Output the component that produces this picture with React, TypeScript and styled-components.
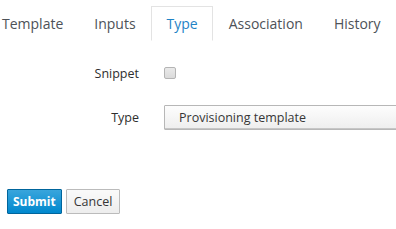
import React from "react";
import styled, { createGlobalStyle } from "styled-components";

const GlobalStyle = createGlobalStyle`
  html, body {
    margin: 0;
    padding: 0;
    background: #fff;
    overflow: hidden;
  }
  body {
    font-family: "Open Sans", "Liberation Sans", sans-serif;
    color: #363636;
  }
`;

const tabs = ["Template", "Inputs", "Type", "Association", "History"];

export default function App() {
  return (
    <>
      <GlobalStyle />
      <Page>
        <TabList>
          {tabs.map((tab) => (
            <Tab key={tab} $active={tab === "Type"}>
              {tab}
            </Tab>
          ))}
        </TabList>
        <Form>
          <FormRow>
            <Label htmlFor="snippet">Snippet</Label>
            <Control>
              <Checkbox id="snippet" type="checkbox" />
            </Control>
          </FormRow>
          <FormRow>
            <Label htmlFor="kind">Type</Label>
            <Control>
              <Select id="kind" defaultValue="provision">
                <option value="provision">Provisioning template</option>
              </Select>
            </Control>
          </FormRow>
        </Form>
        <Actions>
          <Button $primary>Submit</Button>
          <Button>Cancel</Button>
        </Actions>
      </Page>
    </>
  );
}

const Page = styled.div`
  width: 396px;
  height: 229px;
  overflow: hidden;
`;

const TabList = styled.ul`
  display: flex;
  list-style: none;
  margin: 6px 0 0 -14px;
  padding: 0;
  border-bottom: 1px solid #e3e3e3;
`;

const Tab = styled.li<{ $active?: boolean }>`
  height: 33px;
  line-height: 33px;
  padding: 0 14px 0 15px;
  font-size: 14px;
  white-space: nowrap;
  color: ${({ $active }) => ($active ? "#1f83c6" : "#4d5258")};
  border: 1px solid ${({ $active }) => ($active ? "#e3e3e3" : "transparent")};
  border-bottom-color: ${({ $active }) => ($active ? "#fff" : "transparent")};
  margin-bottom: -1px;
  background: #fff;
`;

const Form = styled.div`
  display: flex;
  flex-direction: column;
  gap: 20px;
  margin-top: 20px;
`;

const FormRow = styled.div`
  display: grid;
  grid-template-columns: 139px 1fr;
  column-gap: 25px;
  align-items: center;
  min-height: 24px;
`;

const Label = styled.label`
  text-align: right;
  font-size: 12.5px;
  font-weight: 500;
  color: #2e2e2e;
`;

const Control = styled.div`
  display: flex;
  align-items: center;
`;

const Checkbox = styled.input`
  appearance: none;
  width: 12px;
  height: 12px;
  margin: 0;
  border: 1px solid #b4b4b4;
  border-radius: 2px;
  background: linear-gradient(#e9e9e9, #dadada);
`;

const Select = styled.select`
  appearance: none;
  width: 260px;
  height: 25px;
  padding: 0 14px;
  font-family: "Open Sans", "Liberation Sans", sans-serif;
  font-size: 12.5px;
  color: #363636;
  border: 1px solid #b7b7b7;
  border-radius: 1px;
  background: linear-gradient(#fdfdfd, #eeeeee);
  box-shadow: inset 0 -1px 0 #c6c6c6;
`;

const Actions = styled.div`
  display: flex;
  gap: 4px;
  margin: 59px 0 0 7px;
`;

const Button = styled.button<{ $primary?: boolean }>`
  height: 25px;
  padding: 0 ${({ $primary }) => ($primary ? 5 : 7)}px;
  font-family: "Open Sans", "Liberation Sans", sans-serif;
  font-size: ${({ $primary }) => ($primary ? 12 : 12.5)}px;
  font-weight: ${({ $primary }) => ($primary ? 700 : 400)};
  color: ${({ $primary }) => ($primary ? "#fff" : "#363636")};
  border: 1px solid ${({ $primary }) => ($primary ? "#00659c" : "#bbb")};
  border-radius: 1px;
  background: ${({ $primary }) =>
    $primary
      ? "linear-gradient(#39a5dc, #0088ce)"
      : "linear-gradient(#fafafa, #ededed)"};
`;
